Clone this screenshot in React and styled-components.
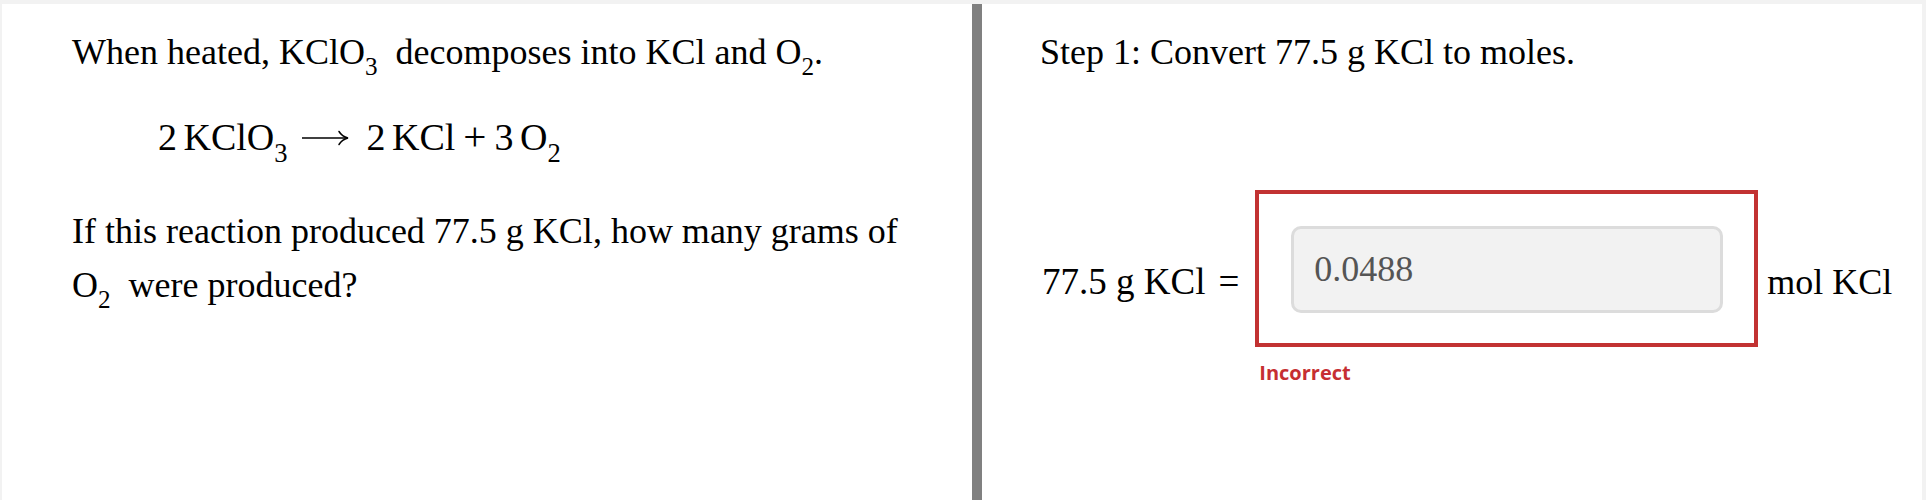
import React from "react";
import styled, { createGlobalStyle } from "styled-components";

const GlobalStyle = createGlobalStyle`
  html, body {
    margin: 0;
    padding: 0;
    background: #f2f2f2;
  }
  body {
    font-family: "Liberation Serif", "Times New Roman", serif;
    color: #000;
  }
`;

const Frame = styled.div`
  height: 500px;
  box-sizing: border-box;
  padding: 4px 4px 0 2px;
  display: flex;
  overflow: hidden;
`;

const Panel = styled.section`
  background: #fff;
  box-sizing: border-box;
  flex: ${(p) => (p.$width ? `0 0 ${p.$width}px` : "1 1 auto")};
  padding: 21px ${(p) => p.$padRight}px 0 ${(p) => p.$padLeft}px;
`;

const Divider = styled.div`
  flex: 0 0 10px;
  background: #808080;
`;

const Text = styled.p`
  margin: ${(p) => p.$mt || 0}px 0 0 0;
  font-size: 36px;
  line-height: 54px;
`;

const Sub = styled.sub`
  font-size: 0.7em;
  line-height: 0;
  vertical-align: -0.45em;
  margin-right: ${(p) => p.$gap || 0}px;
`;

const Equation = styled.div`
  margin: 30px 0 0 86px;
  font-size: 38px;
  line-height: 54px;
  white-space: nowrap;
`;

const Thin = styled.span`
  display: inline-block;
  width: 0.17em;
`;

const Op = styled.span`
  margin: 0 ${(p) => p.$space}px;
  font-size: 1.08em;
`;

const ArrowSvg = styled.svg`
  display: inline-block;
  vertical-align: 0.1em;
  margin: 0 18px 0 14px;
`;

const Arrow = () => (
  <ArrowSvg width="47" height="16" viewBox="0 0 47 16">
    <path d="M0 8 H45" stroke="#000" strokeWidth="1.6" fill="none" />
    <path
      d="M37 1.5 Q40 6.5 46 8 Q40 9.5 37 14.5"
      stroke="#000"
      strokeWidth="1.5"
      fill="none"
      strokeLinecap="round"
    />
  </ArrowSvg>
);

const Row = styled.div`
  margin-top: 111px;
  margin-left: 2px;
  display: flex;
  align-items: flex-start;
`;

const Side = styled.span`
  font-size: ${(p) => p.$size || 36}px;
  line-height: 40px;
  margin-top: 72px;
  margin-right: ${(p) => p.$mr || 0}px;
  margin-left: ${(p) => p.$ml || 0}px;
  white-space: nowrap;
`;

const Rel = styled.span`
  margin-left: 13px;
`;

const AnswerCol = styled.div`
  display: flex;
  flex-direction: column;
`;

const AnswerBox = styled.div`
  width: 503px;
  height: 157px;
  box-sizing: border-box;
  border: 4px solid #c23232;
  padding: 32px 31px 0 32px;
`;

const AnswerInput = styled.input`
  display: block;
  width: 100%;
  height: 87px;
  box-sizing: border-box;
  border: 3px solid #dcdcdc;
  border-radius: 10px;
  background: #f2f2f2;
  padding: 0 20px 2px;
  margin: 0;
  font-family: "Liberation Serif", "Times New Roman", serif;
  font-size: 36px;
  color: #555;
  outline: none;
`;

const Feedback = styled.div`
  margin-top: 12px;
  padding-left: 4px;
  font-family: "Open Sans", "Liberation Sans", sans-serif;
  font-weight: 700;
  font-size: 20px;
  line-height: 27px;
  color: #c62f32;
`;

export default function App() {
  return (
    <>
      <GlobalStyle />
      <Frame>
        <Panel $width={970} $padLeft={70} $padRight={60}>
          <Text>
            When heated, KClO<Sub $gap={9}>3</Sub> decomposes into KCl and O<Sub>2</Sub>.
          </Text>
          <Equation>
            2<Thin />KClO<Sub>3</Sub>
            <Arrow />
            2<Thin />KCl<Op $space={8}>+</Op>3<Thin />O<Sub>2</Sub>
          </Equation>
          <Text $mt={40}>
            If this reaction produced 77.5 g KCl, how many grams of O<Sub $gap={9}>2</Sub> were produced?
          </Text>
        </Panel>
        <Divider />
        <Panel $padLeft={58} $padRight={0}>
          <Text>Step 1: Convert 77.5 g KCl to moles.</Text>
          <Row>
            <Side $size={37} $mr={16}>
              77.5 g KCl<Rel>=</Rel>
            </Side>
            <AnswerCol>
              <AnswerBox>
                <AnswerInput type="text" value="0.0488" readOnly />
              </AnswerBox>
              <Feedback>Incorrect</Feedback>
            </AnswerCol>
            <Side $ml={9}>mol KCl</Side>
          </Row>
        </Panel>
      </Frame>
    </>
  );
}
